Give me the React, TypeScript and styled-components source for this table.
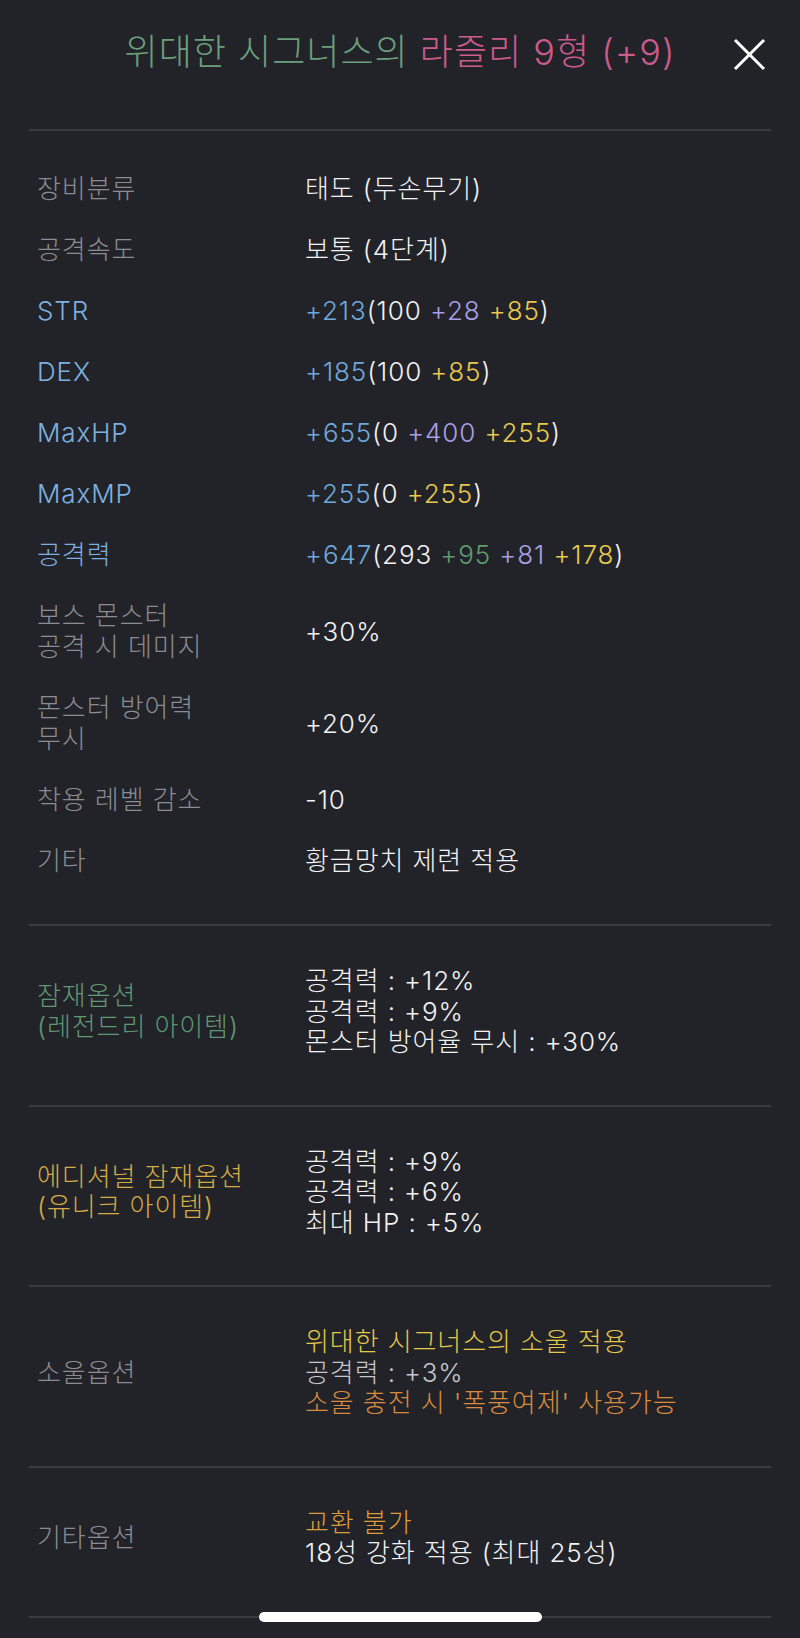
import React from "react";
import styled, { createGlobalStyle } from "styled-components";

const GlobalStyle = createGlobalStyle`
  html, body {
    margin: 0;
    padding: 0;
    background: #222328;
  }
  body {
    font-family: "Inter", "Noto Sans CJK KR", "Noto Sans", sans-serif;
    -webkit-font-smoothing: antialiased;
  }
`;

const Page = styled.div`
  position: relative;
  width: 800px;
  min-height: 1638px;
  background: #222328;
  color: #f2f2f2;
  font-weight: 300;
`;

const Header = styled.header`
  position: relative;
  height: 129px;
  display: flex;
  align-items: flex-start;
  justify-content: center;
  padding-top: 27px;
  box-sizing: border-box;
`;

const Title = styled.h1`
  margin: 0;
  font-size: 36px;
  font-weight: 300;
  line-height: 50px;
  letter-spacing: 1px;
`;

const Tone = styled.span<{ $c: string }>`
  color: ${(p) => p.$c};
`;

const CloseButton = styled.button`
  position: absolute;
  right: 34px;
  top: 38px;
  width: 33px;
  height: 33px;
  padding: 0;
  border: 0;
  background: transparent;
  display: flex;
  align-items: center;
  justify-content: center;
`;

const Divider = styled.hr`
  margin: 0 29px;
  border: 0;
  height: 2px;
  background: #393a41;
`;

const StatList = styled.div`
  display: flex;
  flex-direction: column;
  padding: 27px 37px 33px;
`;

const Row = styled.div`
  display: grid;
  grid-template-columns: 268px 1fr;
  align-items: center;
  padding: 15px 0;
  font-size: 26px;
  line-height: 31px;
  letter-spacing: 0.9px;
`;

const Label = styled.div<{ $c?: string }>`
  color: ${(p) => p.$c || "#8b8c91"};
`;

const Value = styled.div<{ $c?: string }>`
  color: ${(p) => p.$c || "#f2f2f2"};
`;

const OptionSection = styled.div`
  display: grid;
  grid-template-columns: 268px 1fr;
  align-items: center;
  padding: 40px 37px 47px;
  font-size: 26px;
  line-height: 30.5px;
  letter-spacing: 0.9px;
`;

const Lines = styled.div`
  display: flex;
  flex-direction: column;
`;

const HomeIndicator = styled.div`
  position: absolute;
  left: 259px;
  top: 1612px;
  width: 283px;
  height: 10px;
  border-radius: 5px;
  background: #ffffff;
`;

const BLUE = "#6fa9dc";
const BLUE_LABEL = "#7db0e0";
const PURPLE = "#a99fe6";
const YELLOW = "#e8c94d";
const GREEN = "#5f9b6d";

type Part = [string, string?];

const Parts = ({ parts }: { parts: Part[] }) => (
  <>
    {parts.map(([t, c], i) =>
      c ? (
        <Tone key={i} $c={c}>
          {t}
        </Tone>
      ) : (
        <React.Fragment key={i}>{t}</React.Fragment>
      )
    )}
  </>
);

const stats: { label: React.ReactNode; lc?: string; value: Part[] }[] = [
  { label: "장비분류", value: [["태도 (두손무기)"]] },
  { label: "공격속도", value: [["보통 (4단계)"]] },
  {
    label: "STR",
    lc: BLUE_LABEL,
    value: [["+213", BLUE], ["(100 "], ["+28", PURPLE], [" "], ["+85", YELLOW], [")"]],
  },
  {
    label: "DEX",
    lc: BLUE_LABEL,
    value: [["+185", BLUE], ["(100 "], ["+85", YELLOW], [")"]],
  },
  {
    label: "MaxHP",
    lc: BLUE_LABEL,
    value: [["+655", BLUE], ["(0 "], ["+400", PURPLE], [" "], ["+255", YELLOW], [")"]],
  },
  {
    label: "MaxMP",
    lc: BLUE_LABEL,
    value: [["+255", BLUE], ["(0 "], ["+255", YELLOW], [")"]],
  },
  {
    label: "공격력",
    lc: BLUE_LABEL,
    value: [
      ["+647", BLUE],
      ["(293 "],
      ["+95", GREEN],
      [" "],
      ["+81", PURPLE],
      [" "],
      ["+178", YELLOW],
      [")"],
    ],
  },
  {
    label: (
      <>
        보스 몬스터
        <br />
        공격 시 데미지
      </>
    ),
    value: [["+30%"]],
  },
  {
    label: (
      <>
        몬스터 방어력
        <br />
        무시
      </>
    ),
    value: [["+20%"]],
  },
  { label: "착용 레벨 감소", value: [["-10"]] },
  { label: "기타", value: [["황금망치 제련 적용"]] },
];

const CloseIcon = () => (
  <svg width="33" height="33" viewBox="0 0 33 33" fill="none">
    <path d="M2 2 L31 31 M31 2 L2 31" stroke="#ffffff" strokeWidth="3" strokeLinecap="butt" />
  </svg>
);

export default function App() {
  return (
    <>
      <GlobalStyle />
      <Page>
        <Header>
          <Title>
            <Tone $c="#6b9f7c">위대한 시그너스의 </Tone>
            <Tone $c="#cb5b8b">라즐리 9형 (+9)</Tone>
          </Title>
          <CloseButton aria-label="닫기">
            <CloseIcon />
          </CloseButton>
        </Header>
        <Divider />
        <StatList>
          {stats.map((s, i) => (
            <Row key={i}>
              <Label $c={s.lc}>{s.label}</Label>
              <Value>
                <Parts parts={s.value} />
              </Value>
            </Row>
          ))}
        </StatList>
        <Divider />
        <OptionSection>
          <Label $c="#5f9872">
            잠재옵션
            <br />
            (레전드리 아이템)
          </Label>
          <Lines>
            <Value>공격력 : +12%</Value>
            <Value>공격력 : +9%</Value>
            <Value>몬스터 방어율 무시 : +30%</Value>
          </Lines>
        </OptionSection>
        <Divider />
        <OptionSection>
          <Label $c="#d5ab45">
            에디셔널 잠재옵션
            <br />
            (유니크 아이템)
          </Label>
          <Lines>
            <Value>공격력 : +9%</Value>
            <Value>공격력 : +6%</Value>
            <Value>최대 HP : +5%</Value>
          </Lines>
        </OptionSection>
        <Divider />
        <OptionSection>
          <Label>소울옵션</Label>
          <Lines>
            <Value $c="#e3c84b">위대한 시그너스의 소울 적용</Value>
            <Value $c="#c6c6ca">공격력 : +3%</Value>
            <Value $c="#d98a3f">소울 충전 시 '폭풍여제' 사용가능</Value>
          </Lines>
        </OptionSection>
        <Divider />
        <OptionSection>
          <Label>기타옵션</Label>
          <Lines>
            <Value $c="#dc9c3d">교환 불가</Value>
            <Value>18성 강화 적용 (최대 25성)</Value>
          </Lines>
        </OptionSection>
        <Divider />
        <HomeIndicator />
      </Page>
    </>
  );
}
